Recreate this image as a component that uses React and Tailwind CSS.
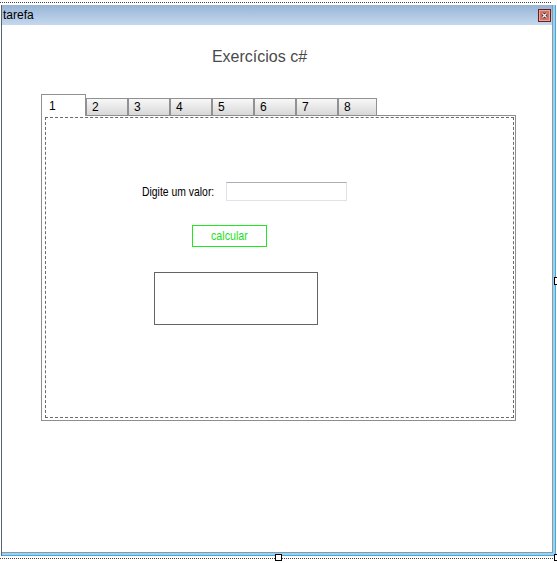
const tabs = [
  { n: '2', w: 'w-[42px]' },
  { n: '3', w: 'w-[42px]' },
  { n: '4', w: 'w-[42px]' },
  { n: '5', w: 'w-[42px]' },
  { n: '6', w: 'w-[42px]' },
  { n: '7', w: 'w-[42px]' },
  { n: '8', w: 'w-[39px]' },
];

function CloseButton() {
  return (
    <svg width={13} height={13} viewBox="0 0 13 13" className="shrink-0">
      <rect x={0.5} y={0.5} width={12} height={12} fill="#cf7268" stroke="#6a1e1e" />
      <rect x={1.5} y={1.5} width={10} height={10} fill="none" stroke="#e9a59c" />
      <path d="M4.5 4.5 L8.5 8.5 M8.5 4.5 L4.5 8.5" stroke="#3f1010" strokeWidth={2.8} />
      <path d="M4.5 4.5 L8.5 8.5 M8.5 4.5 L4.5 8.5" stroke="#ffffff" strokeWidth={1.3} />
    </svg>
  );
}

export default function App() {
  return (
    <div className="relative w-[557px] h-[563px] overflow-hidden bg-white font-['Liberation_Sans',Arial,sans-serif]">
      {/* designer selection outline (top) */}
      <div className="h-[2px]" />
      <div className="w-[551px] border-t border-dotted border-[#444]" />
      <div className="h-[2px]" />

      {/* form window */}
      <div className="ml-px w-[555px] h-[551px] border-l border-r border-b border-l-[#566373] border-r-[#4aa6da] border-b-[#4aa6da]">
        <div className="h-full border-r-2 border-b-2 border-[#98d3ef]">
          <div className="h-full flex flex-col border-r border-b border-[#8c99a6]">
            {/* title bar */}
            <div className="h-[20px] flex items-center justify-between pl-px pr-px bg-gradient-to-b from-[#98b5d5] to-[#c4d8ee]">
              <span className="text-[12px] leading-[14px] text-black">tarefa</span>
              <CloseButton />
            </div>

            {/* client area */}
            <div className="flex-1 bg-white flex flex-col">
              <div className="w-[515px] h-[69px] pt-[22px] text-center text-[16px] leading-[20px] text-[#4a4a4a]">
                Exercícios c#
              </div>

              {/* tab control */}
              <div className="ml-[39px] w-[475px] flex flex-col">
                <div className="h-[21px] flex items-end">
                  <div className="relative z-10 -mb-px w-[45px] h-[22px] border border-b-0 border-[#919191] bg-white pl-[7px] pt-[4px] text-[12px] leading-[14px] text-black">
                    1
                  </div>
                  {tabs.map((t) => (
                    <div
                      key={t.n}
                      className={`${t.w} h-[17px] border border-b-0 border-[#919191] bg-gradient-to-b from-[#f8f8f8] to-[#d8d8d8] pl-[5px] pt-px text-[12px] leading-[14px] text-black`}
                    >
                      {t.n}
                    </div>
                  ))}
                </div>

                <div className="h-[306px] border border-[#8e8e8e] pl-[3px] pr-px pt-px pb-[2px] flex">
                  <div className="flex-1 border border-dashed border-[#6a6a6a] flex flex-col">
                    <div className="mt-[64px] ml-[96px] flex items-center">
                      <div className="w-[84px] h-[19px] flex items-center">
                        <span className="inline-block origin-left scale-x-[0.8] whitespace-nowrap text-[13px] leading-[19px] text-black">
                          Digite um valor:
                        </span>
                      </div>
                      <div className="w-[121px] h-[19px] border border-[#dfe2e8] border-t-[#abadb3] bg-white" />
                    </div>
                    <div className="mt-[24px] ml-[146px] w-[75px] h-[22px] border border-[#1ee81e] flex items-center justify-center">
                      <span className="inline-block scale-x-[0.82] whitespace-nowrap text-[13px] leading-[16px] text-[#22e022]">
                        calcular
                      </span>
                    </div>
                    <div className="mt-[25px] ml-[108px] w-[164px] h-[53px] border border-[#646464]" />
                  </div>
                </div>
              </div>
            </div>
          </div>
        </div>
      </div>

      {/* designer selection outline (bottom) */}
      <div className="h-[2px]" />
      <div className="w-[557px] border-t border-dotted border-[#444]" />

      {/* resize handles */}
      <div className="absolute left-[275px] top-[554px] w-[7px] h-[7px] border border-black bg-white" />
      <div className="absolute left-[554px] top-[277px] w-[7px] h-[8px] border border-black bg-white" />
      <div className="absolute left-[554px] top-[554px] w-[7px] h-[7px] border border-black bg-white" />
    </div>
  );
}
